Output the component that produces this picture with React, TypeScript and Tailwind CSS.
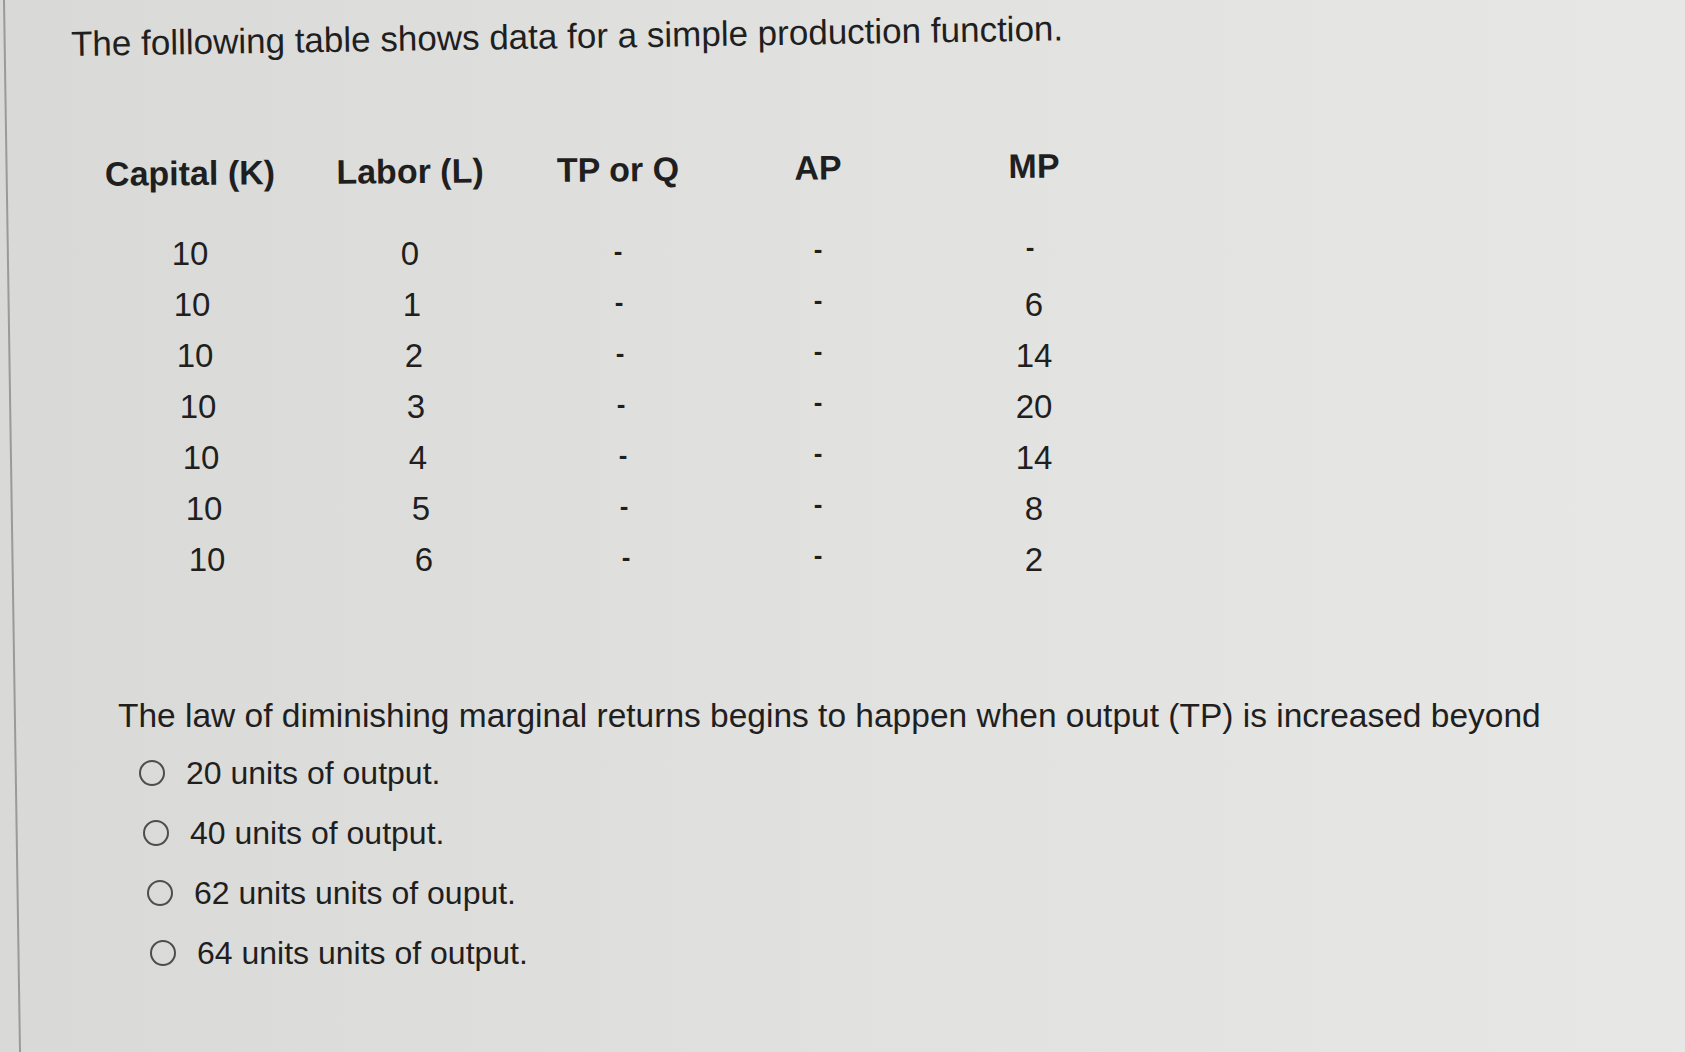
import React from "react";

const rows = [
  { k: "10", l: "0", mp: "-", s1: "pl-[0px]", s2: "pl-[0px]", s3: "pl-[0px]" },
  { k: "10", l: "1", mp: "6", s1: "pl-[4px]", s2: "pl-[4px]", s3: "pl-[2px]" },
  { k: "10", l: "2", mp: "14", s1: "pl-[10px]", s2: "pl-[8px]", s3: "pl-[4px]" },
  { k: "10", l: "3", mp: "20", s1: "pl-[16px]", s2: "pl-[12px]", s3: "pl-[6px]" },
  { k: "10", l: "4", mp: "14", s1: "pl-[22px]", s2: "pl-[16px]", s3: "pl-[10px]" },
  { k: "10", l: "5", mp: "8", s1: "pl-[28px]", s2: "pl-[22px]", s3: "pl-[12px]" },
  { k: "10", l: "6", mp: "2", s1: "pl-[34px]", s2: "pl-[28px]", s3: "pl-[16px]" },
];

const options = [
  { t: "20 units of output.", s: "pl-[0px]" },
  { t: "40 units of output.", s: "pl-[4px]" },
  { t: "62 units units of ouput.", s: "pl-[8px]" },
  { t: "64 units units of output.", s: "pl-[11px]" },
];

export default function App() {
  return (
    <div
      className="relative w-[1685px] h-[1052px] overflow-hidden bg-linear-to-r from-[#d9d9d7] via-[#e1e1df] to-[#e7e7e5] text-[#1f1f1f]"
      style={{ fontFamily: '"Liberation Sans", Arial, sans-serif' }}
    >
      <svg className="absolute left-0 top-0" width="40" height="1052">
        <line x1="4" y1="0" x2="20" y2="1052" stroke="#9a9a98" strokeWidth="2" />
      </svg>

      <div className="pl-[71px] pt-[23px]">
        <div className="text-[35px] leading-[42px] origin-left -rotate-[0.9deg]">
          The folllowing table shows data for a simple production function.
        </div>
      </div>

      <div className="ml-[80px] mt-[88px] grid grid-cols-[220px_220px_196px_204px_228px] text-[34px] leading-[42px] font-bold text-center origin-left -rotate-[0.5deg]">
        <div>Capital (K)</div>
        <div>Labor (L)</div>
        <div>TP or Q</div>
        <div>AP</div>
        <div>MP</div>
      </div>

      <div className="ml-[80px] mt-[33px] flex flex-col text-[33px]">
        {rows.map((r, i) => (
          <div key={i} className="grid grid-cols-[220px_220px_196px_204px_228px] h-[51px] items-center text-center leading-none">
            <div className={r.s1}>{r.k}</div>
            <div className={r.s2}>{r.l}</div>
            <div className={r.s3 + " text-[26px] font-bold -translate-y-[3px]"}>-</div>
            <div className="text-[26px] font-bold -translate-y-[5px]">-</div>
            <div className={r.mp === "-" ? "text-[26px] font-bold -translate-y-[7px] -translate-x-[4px]" : ""}>{r.mp}</div>
          </div>
        ))}
      </div>

      <div className="pl-[118px] mt-[112px] text-[33.5px] leading-[38px]">
        The law of diminishing marginal returns begins to happen when output (TP) is increased beyond
      </div>

      <div className="pl-[139px] mt-[8px] flex flex-col text-[32px]">
        {options.map((o, i) => (
          <div key={i} className={"h-[60px] flex items-center gap-[21px] " + o.s}>
            <div className="w-[26px] h-[26px] rounded-full border-[2.5px] border-[#4d4d4d] shrink-0" />
            <span className="leading-none">{o.t}</span>
          </div>
        ))}
      </div>
    </div>
  );
}
